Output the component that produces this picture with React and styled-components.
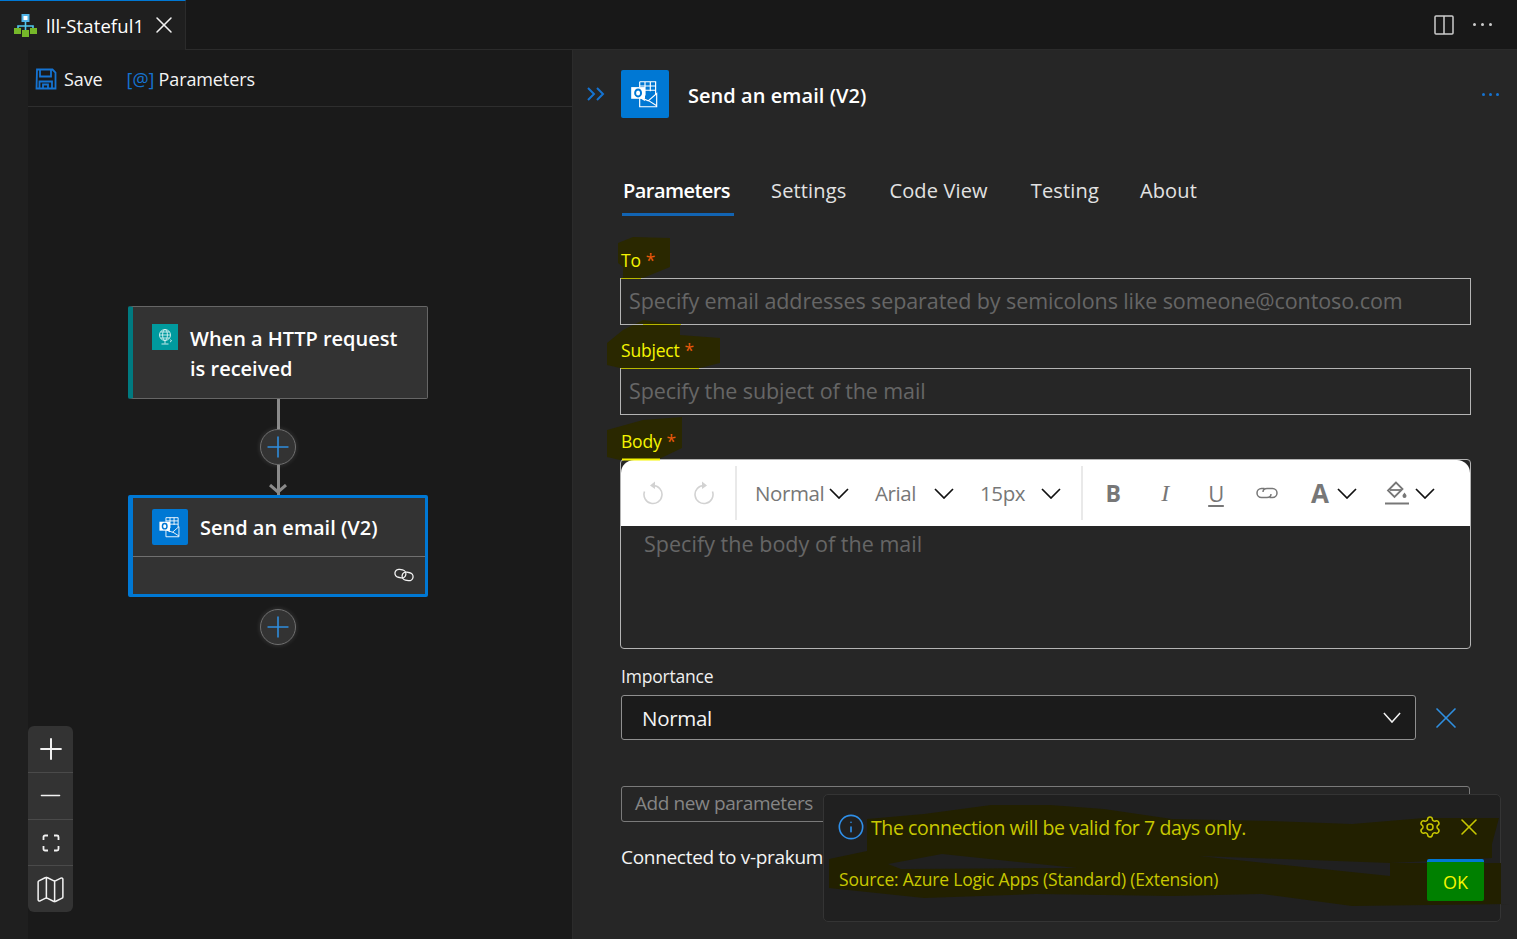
import React from 'react';
import styled, { createGlobalStyle } from 'styled-components';
import { Info, Map, Minus, Plus, Settings, X } from 'lucide-react';

const GlobalStyle = createGlobalStyle`
  html, body {
    margin: 0;
    height: 100%;
    overflow: hidden;
    background: #1f1f1f;
    font-family: "Open Sans", "Noto Sans", "Liberation Sans", sans-serif;
    color: #f2f2f2;
  }
  * { box-sizing: border-box; }
`;

const Shell = styled.div`
  width: 1517px;
  height: 939px;
  display: flex;
  flex-direction: column;
  overflow: hidden;
`;

const TitleBar = styled.div`
  height: 50px;
  flex: none;
  display: flex;
  justify-content: space-between;
  background: #181818;
  border-bottom: 1px solid #2b2b2b;
`;

const Tab = styled.div`
  width: 186px;
  height: 51px;
  display: flex;
  align-items: center;
  padding: 0 0 2px 13px;
  background: #1f1f1f;
  border-top: 1px solid #0078d4;
  border-right: 1px solid #2b2b2b;
  font-size: 18.5px;
  letter-spacing: 0.1px;
  color: #fff;
  svg { flex: none; }
  span { margin: 0 6px 0 8px; white-space: nowrap; }
`;

const TitleActions = styled.div`
  display: flex;
  align-items: center;
  gap: 19px;
  padding-right: 25px;
  color: #ccc;
`;

const DotRow = styled.div`
  display: flex;
  gap: ${(props) => props.$gap || 5}px;
  div {
    width: 3px;
    height: 3px;
    border-radius: 50%;
    background: ${(props) => props.$color || '#ccc'};
  }
`;

const Main = styled.div`
  flex: 1;
  display: flex;
  min-height: 0;
`;

const ActivityStrip = styled.div`
  width: 28px;
  flex: none;
  background: #1f1f1f;
`;

const Canvas = styled.div`
  position: relative;
  width: 545px;
  flex: none;
  background: #1a1a1a;
  border-right: 1px solid #2b2b2b;
`;

const CanvasToolbar = styled.div`
  height: 57px;
  display: flex;
  align-items: center;
  padding: 2px 0 0 7px;
  border-bottom: 1px solid #2e2e2e;
`;

const ToolbarItem = styled.div`
  display: flex;
  align-items: center;
  gap: ${(props) => props.$gap || 6}px;
  margin-right: 24px;
  font-size: 18px;
  letter-spacing: -0.1px;
  color: #f4f4f4;
`;

const AtGlyph = styled.span`
  font-size: 18px;
  letter-spacing: 0;
  color: #1573d1;
`;

const Flow = styled.div`
  width: 300px;
  margin: 199px 0 0 100px;
  display: flex;
  flex-direction: column;
  align-items: center;
`;

const NodeCard = styled.div`
  width: 300px;
  height: ${(props) => props.$height}px;
  background: #333;
  border-radius: 2px;
  border: ${(props) => (props.$selected ? '3px solid #0078d4' : '1px solid #666')};
  border-left: 5px solid ${(props) => (props.$selected ? '#0078d4' : '#007a80')};
  color: #fff;
  font-weight: 600;
  font-size: 20px;
  letter-spacing: 0;
`;

const TriggerBody = styled.div`
  display: flex;
  padding: 17px 24px 0 19px;
  line-height: 30px;
  span { margin: 0 0 0 12px; }
  svg { flex: none; }
`;

const ActionHead = styled.div`
  height: 59px;
  display: flex;
  align-items: center;
  gap: 12px;
  padding: 0 0 0 19px;
  border-bottom: 1px solid #707070;
`;

const ActionFoot = styled.div`
  display: flex;
  justify-content: flex-end;
  padding: 11px 11px 0 0;
`;

const Wire = styled.div`
  width: 3px;
  height: ${(props) => props.$height}px;
  background: #8a8a8a;
`;

const AddButton = styled.div`
  width: 36px;
  height: 36px;
  flex: none;
  display: flex;
  align-items: center;
  justify-content: center;
  border-radius: 50%;
  background: #333;
  border: 1px solid #6e6e6e;
  box-shadow: 0 0 5px rgba(255, 255, 255, 0.15);
  color: #2f8fe0;
  margin: ${(props) => props.$margin || 0};
`;

const ArrowHead = styled.svg`
  display: block;
  margin-top: -11px;
  margin-bottom: 1px;
`;

const ZoomControls = styled.div`
  position: absolute;
  left: 0;
  bottom: 27px;
  width: 45px;
  background: #333;
  border-radius: 6px;
`;

const ZoomButton = styled.div`
  height: ${(props) => (props.$first ? 46 : 46.67)}px;
  display: flex;
  align-items: center;
  justify-content: center;
  color: #f2f2f2;
  border-top: ${(props) => (props.$first ? 'none' : '1px solid #4a4a4a')};
`;

const Panel = styled.div`
  position: relative;
  flex: 1;
  background: #262626;
`;

const Markers = styled.svg`
  position: absolute;
  top: 0;
  left: 0;
  z-index: 0;
  overflow: visible;
  pointer-events: none;
`;

const MarkerLines = styled(Markers)`
  z-index: 2;
`;

const PanelInner = styled.div`
  position: relative;
  z-index: 1;
  height: 100%;
`;

const PanelHead = styled.div`
  height: 68px;
  padding: 20px 18px 0 14px;
  display: flex;
  align-items: center;
  color: #fff;
`;

const BrandIcon = styled.div`
  width: ${(props) => props.$size}px;
  height: ${(props) => props.$size}px;
  margin-left: ${(props) => props.$ml || 0}px;
  flex: none;
  display: flex;
  align-items: center;
  justify-content: center;
  border-radius: 2px;
  background: #0078d4;
`;

const PanelTitle = styled.div`
  flex: 1;
  margin-left: 19px;
  padding-top: 2px;
  font-size: 20px;
  font-weight: 600;
  letter-spacing: 0.05px;
`;

const Tabs = styled.div`
  display: flex;
  margin: 58px 0 0 49px;
  height: 40px;
`;

const TabItem = styled.div`
  height: 40px;
  margin-right: ${(props) => props.$mr || 43}px;
  padding: 0 ${(props) => (props.$active ? 4 : 0)}px 0 ${(props) => (props.$active ? 1 : 0)}px;
  font-size: 20px;
  letter-spacing: ${(props) => (props.$active ? -0.55 : 0.15)}px;
  line-height: 30px;
  font-weight: ${(props) => (props.$active ? 600 : 400)};
  color: ${(props) => (props.$active ? '#fff' : '#e2e2e2')};
  border-bottom: ${(props) => (props.$active ? '3px solid #1264b3' : 'none')};
`;

const Form = styled.div`
  width: 851px;
  margin: 33px 0 0 47px;
  display: flex;
  flex-direction: column;
`;

const FieldLabel = styled.div`
  height: 29px;
  padding-left: 1px;
  font-size: 17.5px;
  letter-spacing: -0.2px;
  line-height: ${(props) => (props.$plain ? 20 : 22)}px;
  color: ${(props) => (props.$plain ? '#f0f0f0' : '#f5f500')};
  b { font-weight: 400; margin-left: 5px; color: #e8590c; }
`;

const FieldGap = styled.div`
  height: ${(props) => props.$height}px;
`;

const TextField = styled.div`
  height: 47px;
  padding-left: 8px;
  border: 1px solid #b4b4b4;
  font-size: 21.5px;
  letter-spacing: -0.09px;
  line-height: 44px;
  color: #666;
  white-space: nowrap;
`;

const Editor = styled.div`
  height: 190px;
  border: 1px solid #b4b4b4;
  border-radius: 4px;
`;

const EditorToolbar = styled.div`
  height: 66px;
  display: flex;
  align-items: center;
  padding-left: 12px;
  background: #fff;
  border-radius: 13px 13px 0 0;
  color: #777;
`;

const ToolButton = styled.div`
  width: ${(props) => props.$w}px;
  margin-left: ${(props) => props.$ml || 0}px;
  flex: none;
  display: flex;
  align-items: center;
  justify-content: ${(props) => props.$justify || 'center'};
  color: #777;
  font-size: ${(props) => props.$size || 20.5}px;
  letter-spacing: -0.4px;
  font-weight: ${(props) => props.$weight || 400};
  font-style: ${(props) => (props.$italic ? 'italic' : 'normal')};
  font-family: ${(props) => (props.$serif ? '"Liberation Serif", serif' : 'inherit')};
  text-decoration: ${(props) => (props.$underline ? 'underline' : 'none')};
  text-underline-offset: 3px;
  white-space: nowrap;
`;

const ToolDivider = styled.div`
  width: 2px;
  height: 54px;
  flex: none;
  margin-left: ${(props) => props.$ml}px;
  background: #e9e9e9;
`;

const EditorPlaceholder = styled.div`
  padding: 3px 0 0 23px;
  font-size: 21.5px;
  letter-spacing: 0.03px;
  color: #666;
`;

const SelectRow = styled.div`
  display: flex;
  align-items: center;
  color: #2f8fe0;
`;

const Select = styled.div`
  width: 795px;
  height: 45px;
  margin: 0 12px 0 1px;
  flex: none;
  display: flex;
  align-items: center;
  justify-content: space-between;
  padding: 0 14px 0 20px;
  background: #1b1b1b;
  border: 1px solid #8f8f8f;
  border-radius: 3px;
  font-size: 20.5px;
  letter-spacing: -0.3px;
  color: #f4f4f4;
`;

const AddParams = styled.div`
  width: 849px;
  height: 36px;
  margin: 46px 0 0 1px;
  padding-left: 13px;
  border: 1px solid #7a7a7a;
  border-radius: 3px;
  font-size: 19px;
  letter-spacing: -0.4px;
  line-height: 32px;
  color: #858585;
`;

const Connected = styled.div`
  margin: 22px 0 0 1px;
  font-size: 19px;
  letter-spacing: -0.3px;
  color: #f4f4f4;
  white-space: nowrap;
`;

const Toast = styled.div`
  position: absolute;
  z-index: 3;
  right: 16px;
  top: 744px;
  width: 678px;
  height: 128px;
  background: #202020;
  border: 1px solid #343434;
  border-radius: 5px;
  color: #c8c800;
`;

const ToastContent = styled.div`
  position: relative;
  z-index: 1;
  padding: 16px 16px 0 13px;
`;

const ToastRow = styled.div`
  display: flex;
  align-items: center;
  height: 32px;
  svg { flex: none; }
`;

const ToastMessage = styled.div`
  flex: 1;
  margin-left: 6px;
  font-size: 19.5px;
  letter-spacing: -0.4px;
`;

const ToastIcons = styled.div`
  display: flex;
  align-items: center;
  gap: 13px;
  margin-right: 1px;
`;

const ToastFoot = styled.div`
  display: flex;
  align-items: center;
  justify-content: space-between;
  margin-top: 16px;
`;

const ToastSource = styled.div`
  margin: 0 0 2px 2px;
  font-size: 17.5px;
  letter-spacing: -0.19px;
`;

const OkButton = styled.div`
  width: 57px;
  height: 42px;
  display: flex;
  align-items: center;
  justify-content: center;
  background: #008000;
  border-top: 3px solid #0078d4;
  border-radius: 2px;
  font-size: 18px;
  color: #f5f500;
`;

// logic app glyph used on the editor tab
const WorkflowIcon = () => (
  <svg width="25" height="25" viewBox="0 0 25 25">
    <path d="M12.5 9v8M5 17v-4h15v4" fill="none" stroke="#50c8f0" strokeWidth="1.6" />
    <rect x="8.5" y="1" width="8" height="8" fill="#50b4e8" />
    <rect x="10.5" y="3" width="4" height="4" fill="#fff" />
    <rect x="1" y="15" width="7" height="6" fill="#76b82a" />
    <rect x="9" y="17" width="7" height="7" fill="#76b82a" />
    <rect x="17" y="15" width="7" height="6" fill="#76b82a" />
  </svg>
);

const SaveIcon = () => (
  <svg width="22" height="22" viewBox="0 0 22 22" fill="none" stroke="#1573d1" strokeWidth="1.8">
    <path d="M2 1.5h15.5l3 3v16h-19z" />
    <path d="M5 2v6.5h11V2M4.5 20.5v-7h12.5v7M8 20.5v-4h5v4" />
  </svg>
);

const OutlookIcon = ({ size }) => (
  <svg width={size} height={size} viewBox="0 0 32 32" fill="none" stroke="#fff" strokeWidth="1.1">
    <path d="M11 4.5h15v12M11 4.5v5M16 4.5v13M21 4.5v9M11 8.5h15M11 12.5h15" />
    <path d="M11 19v9h16V15.500l-8 7z" />
    <path d="M11 19l5 3M27 27l-8-5" />
    <rect x="3" y="9.500" width="13" height="11" fill="#fff" stroke="none" />
    <ellipse cx="9.500" cy="15" rx="2.800" ry="3.300" stroke="#0078d4" strokeWidth="1.800" />
  </svg>
);

const RequestIcon = () => (
  <svg width="26" height="26" viewBox="0 0 26 26">
    <rect width="26" height="26" fill="#009a9e" />
    <g fill="none" stroke="#d8f3f3" strokeWidth="0.9">
      <circle cx="13" cy="11" r="5.500" />
      <ellipse cx="13" cy="11" rx="2.400" ry="5.500" />
      <path d="M7.500 11h11M8.500 8h9M8.500 14h9M13 16.500v3M9.500 20h7M18.500 15.500l1 1.500-1.500 1" />
    </g>
  </svg>
);

const ChainIcon = () => (
  <svg width="20" height="14" viewBox="0 0 20 14" fill="none" stroke="#f2f2f2" strokeWidth="1.300">
    <rect x="1" y="1.500" width="11" height="8" rx="4" transform="rotate(10 6 5)" />
    <rect x="8" y="4.500" width="11" height="8" rx="4" transform="rotate(10 14 9)" />
  </svg>
);

const LinkIcon = () => (
  <svg width="24" height="12" viewBox="0 0 24 12" fill="none" stroke="#777" strokeWidth="1.500">
    <path d="M9.500 1.500h-3a4.500 4.500 0 0 0 0 9H12c2.500 0 4-1.500 4-3.500" />
    <path d="M14.500 10.500h3a4.500 4.500 0 0 0 0-9H12c-2.500 0-4 1.500-4 3.500" />
  </svg>
);

const ExpandIcon = () => (
  <svg width="18" height="18" viewBox="0 0 18 18" fill="none" stroke="#f2f2f2" strokeWidth="1.800">
    <path d="M1.500 6V3a1.500 1.500 0 0 1 1.500-1.500h3M12 1.500h3A1.500 1.500 0 0 1 16.500 3v3M16.500 12v3a1.500 1.500 0 0 1-1.500 1.500h-3M6 16.500H3A1.500 1.500 0 0 1 1.500 15v-3" />
  </svg>
);

const SplitIcon = () => (
  <svg width="20" height="20" viewBox="0 0 20 20" fill="none" stroke="#ccc" strokeWidth="1.500">
    <rect x="1" y="1" width="18" height="18" rx="1" />
    <path d="M10 1v18" />
  </svg>
);

const CollapseIcon = () => (
  <svg width="18" height="14" viewBox="0 0 18 14" fill="none" stroke="#1573d1" strokeWidth="2">
    <path d="M1 1l6 6-6 6M10 1l6 6-6 6" />
  </svg>
);

const UndoIcon = ({ flip }) => (
  <svg width="24" height="24" viewBox="0 0 24 24" transform={flip ? 'scale(-1 1)' : undefined} fill="none" stroke="#d2d2d2" strokeWidth="1.600">
    <path d="M12 4.500a9 9 0 1 1-8.500 6" />
    <path d="M14 .5L9 4.500l5 3.500z" fill="#d2d2d2" stroke="none" />
  </svg>
);

const FillIcon = () => (
  <svg width="26" height="26" viewBox="0 0 26 26" fill="none" stroke="#777" strokeWidth="1.800">
    <path d="M12 2.500l-8 8 6.500 6.500 8-8z" />
    <path d="M6 10h11" />
    <path d="M20.500 12.500c1.300 1.800 2 2.700 2 3.500a2 2 0 0 1-4 0c0-.8.700-1.700 2-3.500z" fill="#777" stroke="none" />
    <path d="M1 23.500h24" strokeWidth="2" />
  </svg>
);

const Caret = ({ color = '#111', width = 20 }) => (
  <svg width={width} height="11" viewBox="0 0 20 11" preserveAspectRatio="none" fill="none" stroke={color} strokeWidth="1.700">
    <path d="M1 1l9 9 9-9" />
  </svg>
);

const App = () => (
  <Shell>
    <GlobalStyle />
    <TitleBar>
      <Tab>
        <WorkflowIcon />
        <span>lll-Stateful1</span>
        <X size={28} color="#f2f2f2" strokeWidth={1.300} />
      </Tab>
      <TitleActions>
        <SplitIcon />
        <DotRow>
          <div />
          <div />
          <div />
        </DotRow>
      </TitleActions>
    </TitleBar>
    <Main>
      <ActivityStrip />
      <Canvas>
        <CanvasToolbar>
          <ToolbarItem $gap={7}>
            <SaveIcon />
            Save
          </ToolbarItem>
          <ToolbarItem $gap={4}>
            <AtGlyph>[@]</AtGlyph>
            Parameters
          </ToolbarItem>
        </CanvasToolbar>
        <Flow>
          <NodeCard $height={93}>
            <TriggerBody>
              <RequestIcon />
              <span>When a HTTP request is received</span>
            </TriggerBody>
          </NodeCard>
          <Wire $height={30} />
          <AddButton>
            <Plus size={34} strokeWidth={1.100} />
          </AddButton>
          <Wire $height={30} />
          <ArrowHead width="18" height="10" viewBox="0 0 18 10" fill="none" stroke="#8a8a8a" strokeWidth="3">
            <path d="M1 1l8 7 8-7" />
          </ArrowHead>
          <NodeCard $height={102} $selected>
            <ActionHead>
              <BrandIcon $size={36}>
                <OutlookIcon size={26} />
              </BrandIcon>
              Send an email (V2)
            </ActionHead>
            <ActionFoot>
              <ChainIcon />
            </ActionFoot>
          </NodeCard>
          <AddButton $margin="12px 0 0">
            <Plus size={34} strokeWidth={1.100} />
          </AddButton>
        </Flow>
        <ZoomControls>
          <ZoomButton $first>
            <Plus size={34} strokeWidth={1.400} />
          </ZoomButton>
          <ZoomButton>
            <Minus size={31} strokeWidth={1.200} />
          </ZoomButton>
          <ZoomButton>
            <ExpandIcon />
          </ZoomButton>
          <ZoomButton>
            <Map size={33} strokeWidth={1.100} />
          </ZoomButton>
        </ZoomControls>
      </Canvas>
      <Panel>
        <Markers width="944" height="889" viewBox="573 50 944 889" fill="#2a2800">
          <path d="M618 243L633 237L670 238L670 267L643 278L623 278L623 267L618 263Z" />
          <path d="M643 320L680 325L680 335L720 338L720 363L700 368L620 368L607 365L607 343L623 330Z" />
          <path d="M607 430L643 420L682 417L682 448L657 460L620 460L607 457Z" />
        </Markers>
        <PanelInner>
          <PanelHead>
            <CollapseIcon />
            <BrandIcon $size={48} $ml={16}>
              <OutlookIcon size={34} />
            </BrandIcon>
            <PanelTitle>Send an email (V2)</PanelTitle>
            <DotRow $color="#1573d1" $gap={4}>
              <div />
              <div />
              <div />
            </DotRow>
          </PanelHead>
          <Tabs>
            <TabItem $active $mr={37}>Parameters</TabItem>
            <TabItem>Settings</TabItem>
            <TabItem>Code View</TabItem>
            <TabItem $mr={41}>Testing</TabItem>
            <TabItem>About</TabItem>
          </Tabs>
          <Form>
            <FieldLabel>
              To<b>*</b>
            </FieldLabel>
            <TextField>Specify email addresses separated by semicolons like someone@contoso.com</TextField>
            <FieldGap $height={14} />
            <FieldLabel>
              Subject<b>*</b>
            </FieldLabel>
            <TextField>Specify the subject of the mail</TextField>
            <FieldGap $height={15} />
            <FieldLabel>
              Body<b>*</b>
            </FieldLabel>
            <Editor>
              <EditorToolbar>
                <ToolButton $w={40}>
                  <UndoIcon />
                </ToolButton>
                <ToolButton $w={40} $ml={11}>
                  <UndoIcon flip />
                </ToolButton>
                <ToolDivider $ml={11} />
                <ToolButton $w={94} $ml={18} $justify="space-between">
                  Normal
                  <Caret />
                </ToolButton>
                <ToolButton $w={79} $ml={26} $justify="space-between">
                  Arial
                  <Caret />
                </ToolButton>
                <ToolButton $w={81} $ml={26} $justify="space-between">
                  15px
                  <Caret />
                </ToolButton>
                <ToolDivider $ml={20} />
                <ToolButton $w={30} $ml={15} $weight={700} $size={23}>
                  B
                </ToolButton>
                <ToolButton $w={30} $ml={22} $italic $serif $size={24}>
                  I
                </ToolButton>
                <ToolButton $w={30} $ml={21} $underline $size={22}>
                  U
                </ToolButton>
                <ToolButton $w={30} $ml={21}>
                  <LinkIcon />
                </ToolButton>
                <ToolButton $w={46} $ml={29} $weight={700} $size={26} $justify="space-between">
                  A
                  <Caret />
                </ToolButton>
                <ToolButton $w={51} $ml={27} $justify="space-between">
                  <FillIcon />
                  <Caret />
                </ToolButton>
              </EditorToolbar>
              <EditorPlaceholder>Specify the body of the mail</EditorPlaceholder>
            </Editor>
            <FieldGap $height={17} />
            <FieldLabel $plain>Importance</FieldLabel>
            <SelectRow>
              <Select>
                Normal
                <Caret color="#f2f2f2" width={18} />
              </Select>
              <X size={36} strokeWidth={1.100} />
            </SelectRow>
            <AddParams>Add new parameters</AddParams>
            <Connected>Connected to v-prakum</Connected>
          </Form>
        </PanelInner>
        <MarkerLines width="944" height="889" viewBox="573 50 944 889" fill="none" strokeWidth="1">
          <path d="M621 278.500H641" stroke="#b8b800" />
          <path d="M643 324.500H681" stroke="#b8b800" />
          <path d="M621 368.500H699" stroke="#b8b800" />
          <path d="M622 459.500H660" stroke="#f5f500" strokeWidth="2" />
        </MarkerLines>
        <Toast>
          <Markers width="678" height="128" viewBox="0 0 678 128" fill="#222000" fillRule="evenodd">
            <path d="M5 64L43 56L43 24L100 19L167 10L226 10L280 14L348 24L447 26L528 29L600 23L675 23L668 49L668 63L566 68L677 68L677 109L686 109L528 111L438 99L348 101L212 99L100 103L5 93Z M64 69L118 59L253 73L77 74Z M375 61L566 68L566 81Z" />
          </Markers>
          <ToastContent>
            <ToastRow>
              <Info size={28} color="#2f8fe8" strokeWidth={1.400} />
              <ToastMessage>The connection will be valid for 7 days only.</ToastMessage>
              <ToastIcons>
                <Settings size={24} strokeWidth={1.500} />
                <X size={28} strokeWidth={1.300} />
              </ToastIcons>
            </ToastRow>
            <ToastFoot>
              <ToastSource>Source: Azure Logic Apps (Standard) (Extension)</ToastSource>
              <OkButton>OK</OkButton>
            </ToastFoot>
          </ToastContent>
        </Toast>
      </Panel>
    </Main>
  </Shell>
);

export default App;
